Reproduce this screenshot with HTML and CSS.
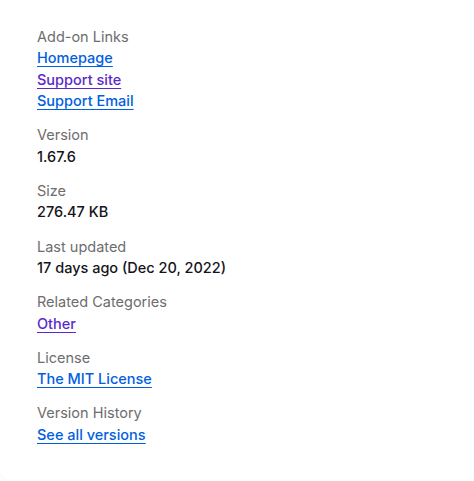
FILE: index.html
```html
<!DOCTYPE html>
<html lang="en">
<head>
<meta charset="utf-8">
<link rel="stylesheet" href="styles.css">
</head>
<body>
<div class="card">
  <dl class="meta">
    <div class="group">
      <dt>Add-on Links</dt>
      <dd><a href="#h" class="link">Homepage</a></dd>
      <dd><a href="#s" class="link visited">Support site</a></dd>
      <dd><a href="#e" class="link">Support Email</a></dd>
    </div>
    <div class="group">
      <dt>Version</dt>
      <dd class="value">1.67.6</dd>
    </div>
    <div class="group">
      <dt>Size</dt>
      <dd class="value">276.47 KB</dd>
    </div>
    <div class="group">
      <dt>Last updated</dt>
      <dd class="value">17 days ago (Dec 20, 2022)</dd>
    </div>
    <div class="group">
      <dt>Related Categories</dt>
      <dd><a href="#o" class="link visited">Other</a></dd>
    </div>
    <div class="group">
      <dt>License</dt>
      <dd><a href="#l" class="link">The MIT License</a></dd>
    </div>
    <div class="group">
      <dt>Version History</dt>
      <dd><a href="#v" class="link">See all versions</a></dd>
    </div>
  </dl>
</div>
</body>
</html>
```

FILE: styles.css
```css
html, body {
  margin: 0;
  padding: 0;
  background: #ffffff;
}
body {
  font-family: Inter, "Noto Sans", sans-serif;
  font-size: 14.5px;
  line-height: 21.4px;
  color: #15141a;
}
.card {
  height: 479px;
  box-sizing: border-box;
  padding: 26px 37px 0;
  background: #ffffff;
  border-radius: 0 0 8px 8px;
  box-shadow: 0 1px 2px rgba(0, 0, 0, 0.04);
}
.meta {
  margin: 0;
  display: flex;
  flex-direction: column;
  gap: 12.8px;
}
.group {
  display: flex;
  flex-direction: column;
}
dt {
  color: #6d6d6e;
  font-weight: 400;
}
dd {
  margin: 0;
}
.value {
  font-weight: 500;
  color: #15141a;
}
.link {
  color: #0060df;
  font-weight: 500;
  text-decoration: underline;
  text-underline-offset: 3px;
  text-decoration-thickness: 1px;
}
.link.visited {
  color: #592acb;
}
```
